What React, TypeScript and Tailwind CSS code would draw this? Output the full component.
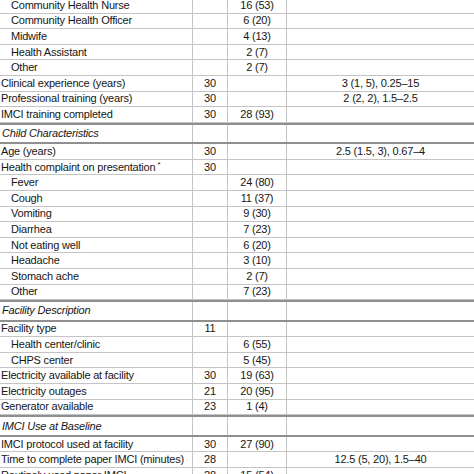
// Baseline characteristics table — a cropped slice of a journal table.
// Grid rows: label | N | n (%) | median (IQR), range. Section headers get
// thick rules above and below.

type Row =
  | { kind: 'row'; label: string; indent?: boolean; n?: string; pct?: string; med?: string; star?: boolean }
  | { kind: 'head'; label: string };

const ROWS: Row[] = [
  { kind: 'row', label: 'Community Health Nurse', indent: true, pct: '16 (53)' },
  { kind: 'row', label: 'Community Health Officer', indent: true, pct: '6 (20)' },
  { kind: 'row', label: 'Midwife', indent: true, pct: '4 (13)' },
  { kind: 'row', label: 'Health Assistant', indent: true, pct: '2 (7)' },
  { kind: 'row', label: 'Other', indent: true, pct: '2 (7)' },
  { kind: 'row', label: 'Clinical experience (years)', n: '30', med: '3 (1, 5), 0.25–15' },
  { kind: 'row', label: 'Professional training (years)', n: '30', med: '2 (2, 2), 1.5–2.5' },
  { kind: 'row', label: 'IMCI training completed', n: '30', pct: '28 (93)' },
  { kind: 'head', label: 'Child Characteristics' },
  { kind: 'row', label: 'Age (years)', n: '30', med: '2.5 (1.5, 3), 0.67–4' },
  { kind: 'row', label: 'Health complaint on presentation', star: true, n: '30' },
  { kind: 'row', label: 'Fever', indent: true, pct: '24 (80)' },
  { kind: 'row', label: 'Cough', indent: true, pct: '11 (37)' },
  { kind: 'row', label: 'Vomiting', indent: true, pct: '9 (30)' },
  { kind: 'row', label: 'Diarrhea', indent: true, pct: '7 (23)' },
  { kind: 'row', label: 'Not eating well', indent: true, pct: '6 (20)' },
  { kind: 'row', label: 'Headache', indent: true, pct: '3 (10)' },
  { kind: 'row', label: 'Stomach ache', indent: true, pct: '2 (7)' },
  { kind: 'row', label: 'Other', indent: true, pct: '7 (23)' },
  { kind: 'head', label: 'Facility Description' },
  { kind: 'row', label: 'Facility type', n: '11' },
  { kind: 'row', label: 'Health center/clinic', indent: true, pct: '6 (55)' },
  { kind: 'row', label: 'CHPS center', indent: true, pct: '5 (45)' },
  { kind: 'row', label: 'Electricity available at facility', n: '30', pct: '19 (63)' },
  { kind: 'row', label: 'Electricity outages', n: '21', pct: '20 (95)' },
  { kind: 'row', label: 'Generator available', n: '23', pct: '1 (4)' },
  { kind: 'head', label: 'IMCI Use at Baseline' },
  { kind: 'row', label: 'IMCI protocol used at facility', n: '30', pct: '27 (90)' },
  { kind: 'row', label: 'Time to complete paper IMCI (minutes)', n: '28', med: '12.5 (5, 20), 1.5–40' },
  { kind: 'row', label: 'Routinely used paper IMCI', n: '28', pct: '15 (54)' },
];

const GRID = 'grid grid-cols-[193px_35px_59px_1fr]';
const CELL = 'flex items-center border-r border-[#c4c4c4] whitespace-nowrap';

export default function App() {
  return (
    <div
      className="h-[474px] w-[474px] overflow-hidden bg-white text-[11px] leading-none tracking-[-0.2px] text-[#161616]"
      style={{ fontFamily: '"Liberation Sans", Arial, Helvetica, sans-serif' }}
    >
      <div className="-mt-[2px]">
        {ROWS.map((r, i) =>
          r.kind === 'head' ? (
            <div key={i} className={`${GRID} h-[21.5px] border-y-[2.5px] border-[#8f8f8f]`}>
              <div className={`${CELL} pl-[2px] italic`}>{r.label}</div>
              <div className={CELL} />
              <div className={CELL} />
              <div />
            </div>
          ) : (
            <div key={i} className={`${GRID} h-[15.6px] border-b border-[#c4c4c4]`}>
              <div className={`${CELL} ${r.indent ? 'pl-[11px]' : 'pl-[1px]'}`}>
                {r.label}
                {r.star && <span className="relative -top-[2px] ml-[2px] text-[8px]">*</span>}
              </div>
              <div className={`${CELL} justify-center`}>{r.n}</div>
              <div className={`${CELL} justify-center`}>{r.pct}</div>
              <div className="flex items-center justify-center whitespace-nowrap">{r.med}</div>
            </div>
          ),
        )}
      </div>
    </div>
  );
}
